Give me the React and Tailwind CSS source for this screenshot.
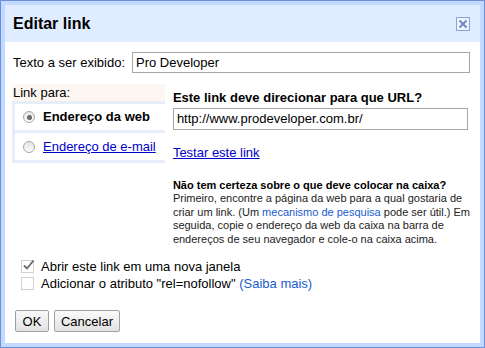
import React from "react";

function Radio({ checked }) {
  return (
    <span className="relative inline-block w-[12px] h-[12px] rounded-full border border-[#a9a9a9] bg-gradient-to-b from-[#e6e6e6] to-[#fbfbfb] shrink-0">
      {checked && (
        <span className="absolute left-[2.5px] top-[2.5px] w-[5px] h-[5px] rounded-full bg-[#6a6a6a]" />
      )}
    </span>
  );
}

function Checkbox({ checked }) {
  return (
    <span className="relative inline-block w-[13px] h-[13px] border border-[#d0d0d0] bg-white shrink-0">
      {checked && (
        <svg className="absolute -left-[1px] -top-[3px]" width="15" height="15" viewBox="0 0 15 15">
          <path d="M3 7.5 L6 10.5 L12.5 2.5" fill="none" stroke="#6b6b6b" strokeWidth="1.8" />
        </svg>
      )}
    </span>
  );
}

function Button({ children, className = "" }) {
  return (
    <button className={"h-[22px] border border-[#a0a0a0] rounded-[2px] bg-gradient-to-b from-[#fafafa] to-[#e2e2e2] text-[13px] text-black leading-none " + className}>
      {children}
    </button>
  );
}

export default function App() {
  return (
    <div
      className="w-[485px] h-[348px] bg-[#c3d9ff] border border-[#6b90da] p-[4px] flex flex-col text-[13px] text-black"
      style={{ fontFamily: '"Liberation Sans", Arial, sans-serif' }}
    >
      <div className="flex-1 bg-white flex flex-col">
        <div className="h-[37px] bg-[#e0ecff] flex items-center justify-between pl-[8px] pr-[10px]">
          <span className="text-[16px] font-bold">Editar link</span>
          <span className="w-[14px] h-[14px] border border-[#8aa3d6] bg-[#eef3ff] flex items-center justify-center">
            <svg width="10" height="10" viewBox="0 0 10 10">
              <path d="M1.5 1.5 L8.5 8.5 M8.5 1.5 L1.5 8.5" stroke="#6f8cc8" strokeWidth="2" />
            </svg>
          </span>
        </div>

        <div className="flex flex-col pl-[7px] pr-[10px]">
          <div className="mt-[10px] flex items-center">
            <span className="pl-[1px] w-[120px]">Texto a ser exibido:</span>
            <div className="flex-1 h-[21px] border border-[#a6a6a6] flex items-center px-[3px]">
              Pro Developer
            </div>
          </div>

          <div className="mt-[11px] flex">
            <div className="w-[153px] flex flex-col">
              <div className="h-[17px] bg-[#fdf6f1] pl-[1px] flex items-center">Link para:</div>
              <div className="bg-[#e8eef9] p-[3px] pr-0 flex flex-col gap-[3px]">
                <div className="h-[26px] bg-white flex items-center pl-[8px] gap-[8px]">
                  <Radio checked />
                  <span className="font-bold">Endereço da web</span>
                </div>
                <div className="h-[27px] bg-white flex items-center pl-[8px] gap-[8px]">
                  <Radio />
                  <span className="text-[#0000cc] underline">Endereço de e-mail</span>
                </div>
              </div>
            </div>

            <div className="flex-1 ml-[8px] pt-[6px] flex flex-col">
              <div className="h-[16px] leading-[16px] font-bold">Este link deve direcionar para que URL?</div>
              <div className="mt-[2px] h-[22px] border border-[#a6a6a6] flex items-center px-[3px] mr-[2px]">
                http://www.prodeveloper.com.br/
              </div>
              <div className="mt-[15px] h-[16px] leading-[16px]">
                <span className="text-[#0000cc] underline">Testar este link</span>
              </div>
              <div className="mt-[17px] text-[11px] leading-[13.5px] text-[#222] whitespace-nowrap">
                <div className="font-bold leading-[14px] text-black">Não tem certeza sobre o que deve colocar na caixa?</div>
                <div>Primeiro, encontre a página da web para a qual gostaria de</div>
                <div>
                  criar um link. (Um <span className="text-[#1a5ccf]">mecanismo de pesquisa</span> pode ser útil.) Em
                </div>
                <div>seguida, copie o endereço da web da caixa na barra de</div>
                <div>endereços de seu navegador e cole-o na caixa acima.</div>
              </div>
            </div>
          </div>

          <div className="mt-[12px] flex flex-col pl-[9px]">
            <div className="h-[17px] flex items-center gap-[7px]">
              <Checkbox checked />
              <span>Abrir este link em uma nova janela</span>
            </div>
            <div className="h-[17px] flex items-center gap-[7px]">
              <Checkbox />
              <span>
                Adicionar o atributo "rel=nofollow" <span className="text-[#1a5ccf]">(Saiba mais)</span>
              </span>
            </div>
          </div>

          <div className="mt-[18px] flex gap-[5px] pl-[3px]">
            <Button className="w-[34px]">OK</Button>
            <Button className="w-[66px]">Cancelar</Button>
          </div>
        </div>
      </div>
    </div>
  );
}
